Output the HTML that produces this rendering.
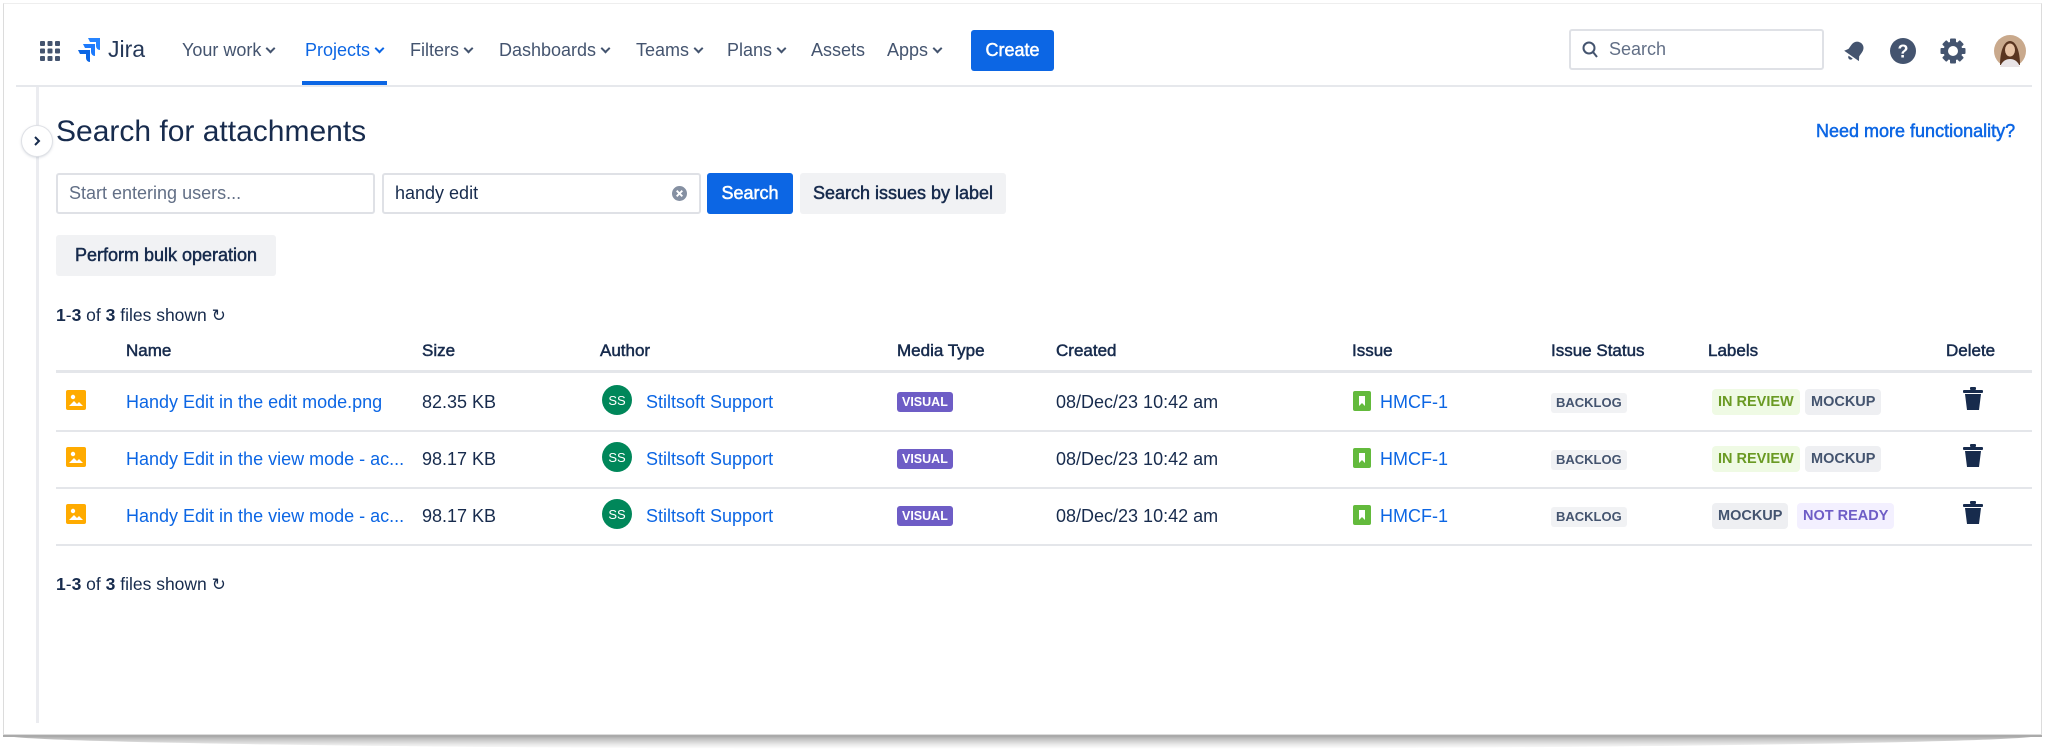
<!DOCTYPE html>
<html><head><meta charset="utf-8"><style>
*{box-sizing:border-box;margin:0;padding:0}
body{width:2048px;height:754px;background:#fff;font-family:"Liberation Sans",sans-serif;color:#172b4d;position:relative;overflow:hidden}
.a{position:absolute;white-space:nowrap}
.card{position:absolute;left:3px;top:3px;width:2039px;height:732px;border:1px solid #dcdcdc;border-top:1px solid #eee;background:#fff}
.nav{font-size:18px;color:#44546f;top:40px}
.chev{display:inline-block;width:7px;height:7px;border-right:2px solid #44546f;border-bottom:2px solid #44546f;transform:rotate(45deg);margin-left:6px;position:relative;top:-4px}
.btn{position:absolute;border-radius:3px;font-size:18px;display:flex;align-items:center;justify-content:center;-webkit-text-stroke:0.5px currentColor}
.inp{position:absolute;border:2px solid #dfe1e6;border-radius:3px;font-size:18px;padding-left:11px;display:flex;align-items:center}
.th{font-size:17px;color:#172b4d;top:341px;-webkit-text-stroke:0.5px #172b4d}
.td{font-size:18px;top:0}
.lnk{color:#0c66e4}
.row{position:absolute;left:0;width:2048px;height:57px}
.row>*{position:absolute}
.hl{position:absolute;left:56px;width:1976px;height:2px;background:#e4e6ea}
.lz{font-size:13px;font-weight:bold;border-radius:3px;padding:3px 5px;line-height:14px}
.lb{font-size:14.5px;font-weight:bold;border-radius:4px;padding:5px 6px;line-height:16px}
</style></head><body>
<div class="card"></div>
<div class="a" style="left:3px;top:735px;width:2039px;height:14px;background:linear-gradient(to bottom,#999 0,#bbb 3px,#e6e6e6 9px,#fff 14px);border-radius:0 0 50% 50%/0 0 100% 100%"></div>
<div class="a" style="left:3px;top:735px;width:2039px;height:2px;background:#aaa"></div>

<svg class="a" style="left:40px;top:41px" width="20" height="20" viewBox="0 0 20 20" fill="#44546f">
<rect x="0" y="0" width="5" height="5" rx="1"/><rect x="7.5" y="0" width="5" height="5" rx="1"/><rect x="15" y="0" width="5" height="5" rx="1"/>
<rect x="0" y="7.5" width="5" height="5" rx="1"/><rect x="7.5" y="7.5" width="5" height="5" rx="1"/><rect x="15" y="7.5" width="5" height="5" rx="1"/>
<rect x="0" y="15" width="5" height="5" rx="1"/><rect x="7.5" y="15" width="5" height="5" rx="1"/><rect x="15" y="15" width="5" height="5" rx="1"/></svg>
<svg class="a" style="left:78px;top:38px" width="24" height="26" viewBox="0 0 24 26">
<path d="M10 0h12v12a4 4 0 0 1-4-4V4h-6z" fill="#2684ff"/>
<path d="M5 6h12v12a4 4 0 0 1-4-4v-4H7z" fill="#1d7afc"/>
<path d="M0 12h12v12a4 4 0 0 1-4-4v-4H2z" fill="#0c66e4"/></svg>
<div class="a" style="left:108px;top:36px;font-size:23px;color:#253858">Jira</div>

<div class="a nav" style="left:182px">Your work<span class="chev"></span></div>
<div class="a nav" style="left:305px;color:#0c66e4">Projects<span class="chev" style="border-color:#0c66e4"></span></div>
<div class="a" style="left:302px;top:81px;width:85px;height:4px;background:#0c66e4"></div>
<div class="a nav" style="left:410px">Filters<span class="chev"></span></div>
<div class="a nav" style="left:499px">Dashboards<span class="chev"></span></div>
<div class="a nav" style="left:636px">Teams<span class="chev"></span></div>
<div class="a nav" style="left:727px">Plans<span class="chev"></span></div>
<div class="a nav" style="left:811px">Assets</div>
<div class="a nav" style="left:887px">Apps<span class="chev"></span></div>
<div class="btn" style="left:971px;top:30px;width:83px;height:41px;background:#0c66e4;color:#fff">Create</div>

<div class="inp" style="left:1569px;top:29px;width:255px;height:41px;color:#626f86;padding-left:38px">Search</div>
<svg class="a" style="left:1582px;top:41px" width="16" height="18" viewBox="0 0 16 18" fill="none" stroke="#44546f" stroke-width="2"><circle cx="7" cy="7" r="5.5"/><path d="M11 11l4 5"/></svg>
<svg class="a" style="left:1842px;top:38px" width="26" height="26" viewBox="0 0 26 26" fill="#44546f"><g transform="rotate(35 13 13)"><path d="M13 3c4 0 6.5 3 6.5 7v5l2.5 4H4l2.5-4v-5C6.5 6 9 3 13 3z"/><path d="M10.5 20.5h5a2.5 2.5 0 0 1-5 0z"/></g></svg>
<svg class="a" style="left:1889px;top:37px" width="28" height="28" viewBox="0 0 28 28"><circle cx="14" cy="14" r="13" fill="#44546f"/><text x="14" y="20.5" font-family="Liberation Sans" font-weight="bold" font-size="18" fill="#fff" text-anchor="middle">?</text></svg>
<svg class="a" style="left:1940px;top:38px" width="26" height="26" viewBox="0 0 26 26"><g fill="#44546f"><circle cx="13" cy="13" r="9.5"/><rect x="10" y="0.5" width="6" height="6" rx="1"/><rect x="10" y="19.5" width="6" height="6" rx="1"/><rect x="0.5" y="10" width="6" height="6" rx="1"/><rect x="19.5" y="10" width="6" height="6" rx="1"/><g transform="rotate(45 13 13)"><rect x="10" y="0.5" width="6" height="6" rx="1"/><rect x="10" y="19.5" width="6" height="6" rx="1"/><rect x="0.5" y="10" width="6" height="6" rx="1"/><rect x="19.5" y="10" width="6" height="6" rx="1"/></g></g><circle cx="13" cy="13" r="5" fill="#fff"/></svg>
<svg class="a" style="left:1994px;top:35px" width="32" height="32" viewBox="0 0 32 32"><circle cx="16" cy="16" r="16" fill="#c9a98c"/><path d="M6 30c0-14 4-24 10-24s10 10 10 24z" fill="#5a3520"/><ellipse cx="16" cy="15" rx="5" ry="6.5" fill="#e8c4a6"/><path d="M6 32c2-6 6-8 10-8s8 2 10 8z" fill="#e9e4e6"/></svg>
<div class="a" style="left:16px;top:85px;width:2016px;height:2px;background:#e6e8ec"></div>

<div class="a" style="left:36px;top:87px;width:3px;height:636px;background:#ebecf0"></div>
<div class="a" style="left:22px;top:126px;width:30px;height:30px;border-radius:50%;background:#fff;box-shadow:0 0 0 1px #dfe1e6,0 1px 3px rgba(9,30,66,.25);display:flex;align-items:center;justify-content:center">
<svg width="10" height="12" viewBox="0 0 10 12" fill="none" stroke="#172b4d" stroke-width="2"><path d="M3 2l4 4-4 4"/></svg></div>

<div class="a" style="left:56px;top:115px;font-size:30px;color:#172b4d">Search for attachments</div>
<div class="a" style="left:1816px;top:121px;font-size:18px;color:#0c66e4;-webkit-text-stroke:0.5px #0c66e4">Need more functionality?</div>

<div class="inp" style="left:56px;top:173px;width:319px;height:41px;color:#626f86">Start entering users...</div>
<div class="inp" style="left:382px;top:173px;width:319px;height:41px;color:#172b4d">handy edit</div>
<svg class="a" style="left:672px;top:186px" width="15" height="15" viewBox="0 0 16 16"><circle cx="8" cy="8" r="8" fill="#8590a2"/><path d="M5 5l6 6M11 5l-6 6" stroke="#fff" stroke-width="2"/></svg>
<div class="btn" style="left:707px;top:173px;width:86px;height:41px;background:#0c66e4;color:#fff">Search</div>
<div class="btn" style="left:800px;top:173px;width:206px;height:41px;background:#f1f2f4;color:#172b4d">Search issues by label</div>
<div class="btn" style="left:56px;top:235px;width:220px;height:41px;background:#f1f2f4;color:#172b4d">Perform bulk operation</div>

<div class="a" style="left:56px;top:305px;font-size:17.5px"><b>1</b>-<b>3</b> of <b>3</b> files shown <span style="font-size:17px">&#x21BB;</span></div>

<div class="a th" style="left:126px">Name</div>
<div class="a th" style="left:422px">Size</div>
<div class="a th" style="left:600px">Author</div>
<div class="a th" style="left:897px">Media Type</div>
<div class="a th" style="left:1056px">Created</div>
<div class="a th" style="left:1352px">Issue</div>
<div class="a th" style="left:1551px">Issue Status</div>
<div class="a th" style="left:1708px">Labels</div>
<div class="a th" style="left:1946px">Delete</div>
<div class="hl" style="top:370px;height:3px"></div>
<div class="hl" style="top:430px"></div>
<div class="hl" style="top:487px"></div>
<div class="hl" style="top:544px"></div>

<div class="row" style="top:373px">
<svg style="left:66px;top:17px" width="20" height="20" viewBox="0 0 20 20"><rect width="20" height="20" rx="2" fill="#ffab00"/><circle cx="7" cy="7" r="2.2" fill="#fff"/><path d="M3 16l5-5 3 3 2-2 4 4z" fill="#fff"/></svg>
<span class="td lnk" style="left:126px;top:19px">Handy Edit in the edit mode.png</span>
<span class="td" style="left:422px;top:19px">82.35 KB</span>
<span style="left:602px;top:12px;width:30px;height:30px;border-radius:50%;background:#00875a;color:#fff;font-size:13px;display:flex;align-items:center;justify-content:center">SS</span>
<span class="td lnk" style="left:646px;top:19px">Stiltsoft Support</span>
<span class="lz" style="left:897px;top:19px;background:#6e5dc6;color:#fff;font-size:12.5px">VISUAL</span>
<span class="td" style="left:1056px;top:19px">08/Dec/23 10:42 am</span>
<svg style="left:1353px;top:18px" width="18" height="20" viewBox="0 0 18 20"><rect width="18" height="20" rx="2" fill="#63ba3c"/><path d="M6 5h6v10l-3-3-3 3z" fill="#fff"/></svg>
<span class="td lnk" style="left:1380px;top:19px">HMCF-1</span>
<span class="lz" style="left:1551px;top:20px;background:#f1f2f4;color:#44546f">BACKLOG</span>
<span class="lb" style="left:1712px;top:16px;background:#effae4;color:#6a9a23">IN REVIEW</span>
<span class="lb" style="left:1805px;top:16px;background:#eeeff2;color:#44546f">MOCKUP</span>
<svg style="left:1963px;top:14px" width="20" height="24" viewBox="0 0 20 24" fill="#172b4d"><rect x="7" y="0" width="6" height="3" rx="1"/><rect x="0" y="3" width="20" height="3" rx="1"/><path d="M2 7h16l-2 16H4z"/></svg>
</div>
<div class="row" style="top:430px">
<svg style="left:66px;top:17px" width="20" height="20" viewBox="0 0 20 20"><rect width="20" height="20" rx="2" fill="#ffab00"/><circle cx="7" cy="7" r="2.2" fill="#fff"/><path d="M3 16l5-5 3 3 2-2 4 4z" fill="#fff"/></svg>
<span class="td lnk" style="left:126px;top:19px">Handy Edit in the view mode - ac...</span>
<span class="td" style="left:422px;top:19px">98.17 KB</span>
<span style="left:602px;top:12px;width:30px;height:30px;border-radius:50%;background:#00875a;color:#fff;font-size:13px;display:flex;align-items:center;justify-content:center">SS</span>
<span class="td lnk" style="left:646px;top:19px">Stiltsoft Support</span>
<span class="lz" style="left:897px;top:19px;background:#6e5dc6;color:#fff;font-size:12.5px">VISUAL</span>
<span class="td" style="left:1056px;top:19px">08/Dec/23 10:42 am</span>
<svg style="left:1353px;top:18px" width="18" height="20" viewBox="0 0 18 20"><rect width="18" height="20" rx="2" fill="#63ba3c"/><path d="M6 5h6v10l-3-3-3 3z" fill="#fff"/></svg>
<span class="td lnk" style="left:1380px;top:19px">HMCF-1</span>
<span class="lz" style="left:1551px;top:20px;background:#f1f2f4;color:#44546f">BACKLOG</span>
<span class="lb" style="left:1712px;top:16px;background:#effae4;color:#6a9a23">IN REVIEW</span>
<span class="lb" style="left:1805px;top:16px;background:#eeeff2;color:#44546f">MOCKUP</span>
<svg style="left:1963px;top:14px" width="20" height="24" viewBox="0 0 20 24" fill="#172b4d"><rect x="7" y="0" width="6" height="3" rx="1"/><rect x="0" y="3" width="20" height="3" rx="1"/><path d="M2 7h16l-2 16H4z"/></svg>
</div>
<div class="row" style="top:487px">
<svg style="left:66px;top:17px" width="20" height="20" viewBox="0 0 20 20"><rect width="20" height="20" rx="2" fill="#ffab00"/><circle cx="7" cy="7" r="2.2" fill="#fff"/><path d="M3 16l5-5 3 3 2-2 4 4z" fill="#fff"/></svg>
<span class="td lnk" style="left:126px;top:19px">Handy Edit in the view mode - ac...</span>
<span class="td" style="left:422px;top:19px">98.17 KB</span>
<span style="left:602px;top:12px;width:30px;height:30px;border-radius:50%;background:#00875a;color:#fff;font-size:13px;display:flex;align-items:center;justify-content:center">SS</span>
<span class="td lnk" style="left:646px;top:19px">Stiltsoft Support</span>
<span class="lz" style="left:897px;top:19px;background:#6e5dc6;color:#fff;font-size:12.5px">VISUAL</span>
<span class="td" style="left:1056px;top:19px">08/Dec/23 10:42 am</span>
<svg style="left:1353px;top:18px" width="18" height="20" viewBox="0 0 18 20"><rect width="18" height="20" rx="2" fill="#63ba3c"/><path d="M6 5h6v10l-3-3-3 3z" fill="#fff"/></svg>
<span class="td lnk" style="left:1380px;top:19px">HMCF-1</span>
<span class="lz" style="left:1551px;top:20px;background:#f1f2f4;color:#44546f">BACKLOG</span>
<span class="lb" style="left:1712px;top:16px;background:#eeeff2;color:#44546f">MOCKUP</span>
<span class="lb" style="left:1797px;top:16px;background:#f3f0ff;color:#6e5dc6">NOT READY</span>
<svg style="left:1963px;top:14px" width="20" height="24" viewBox="0 0 20 24" fill="#172b4d"><rect x="7" y="0" width="6" height="3" rx="1"/><rect x="0" y="3" width="20" height="3" rx="1"/><path d="M2 7h16l-2 16H4z"/></svg>
</div>

<div class="a" style="left:56px;top:574px;font-size:17.5px"><b>1</b>-<b>3</b> of <b>3</b> files shown <span style="font-size:17px">&#x21BB;</span></div>
</body></html>
